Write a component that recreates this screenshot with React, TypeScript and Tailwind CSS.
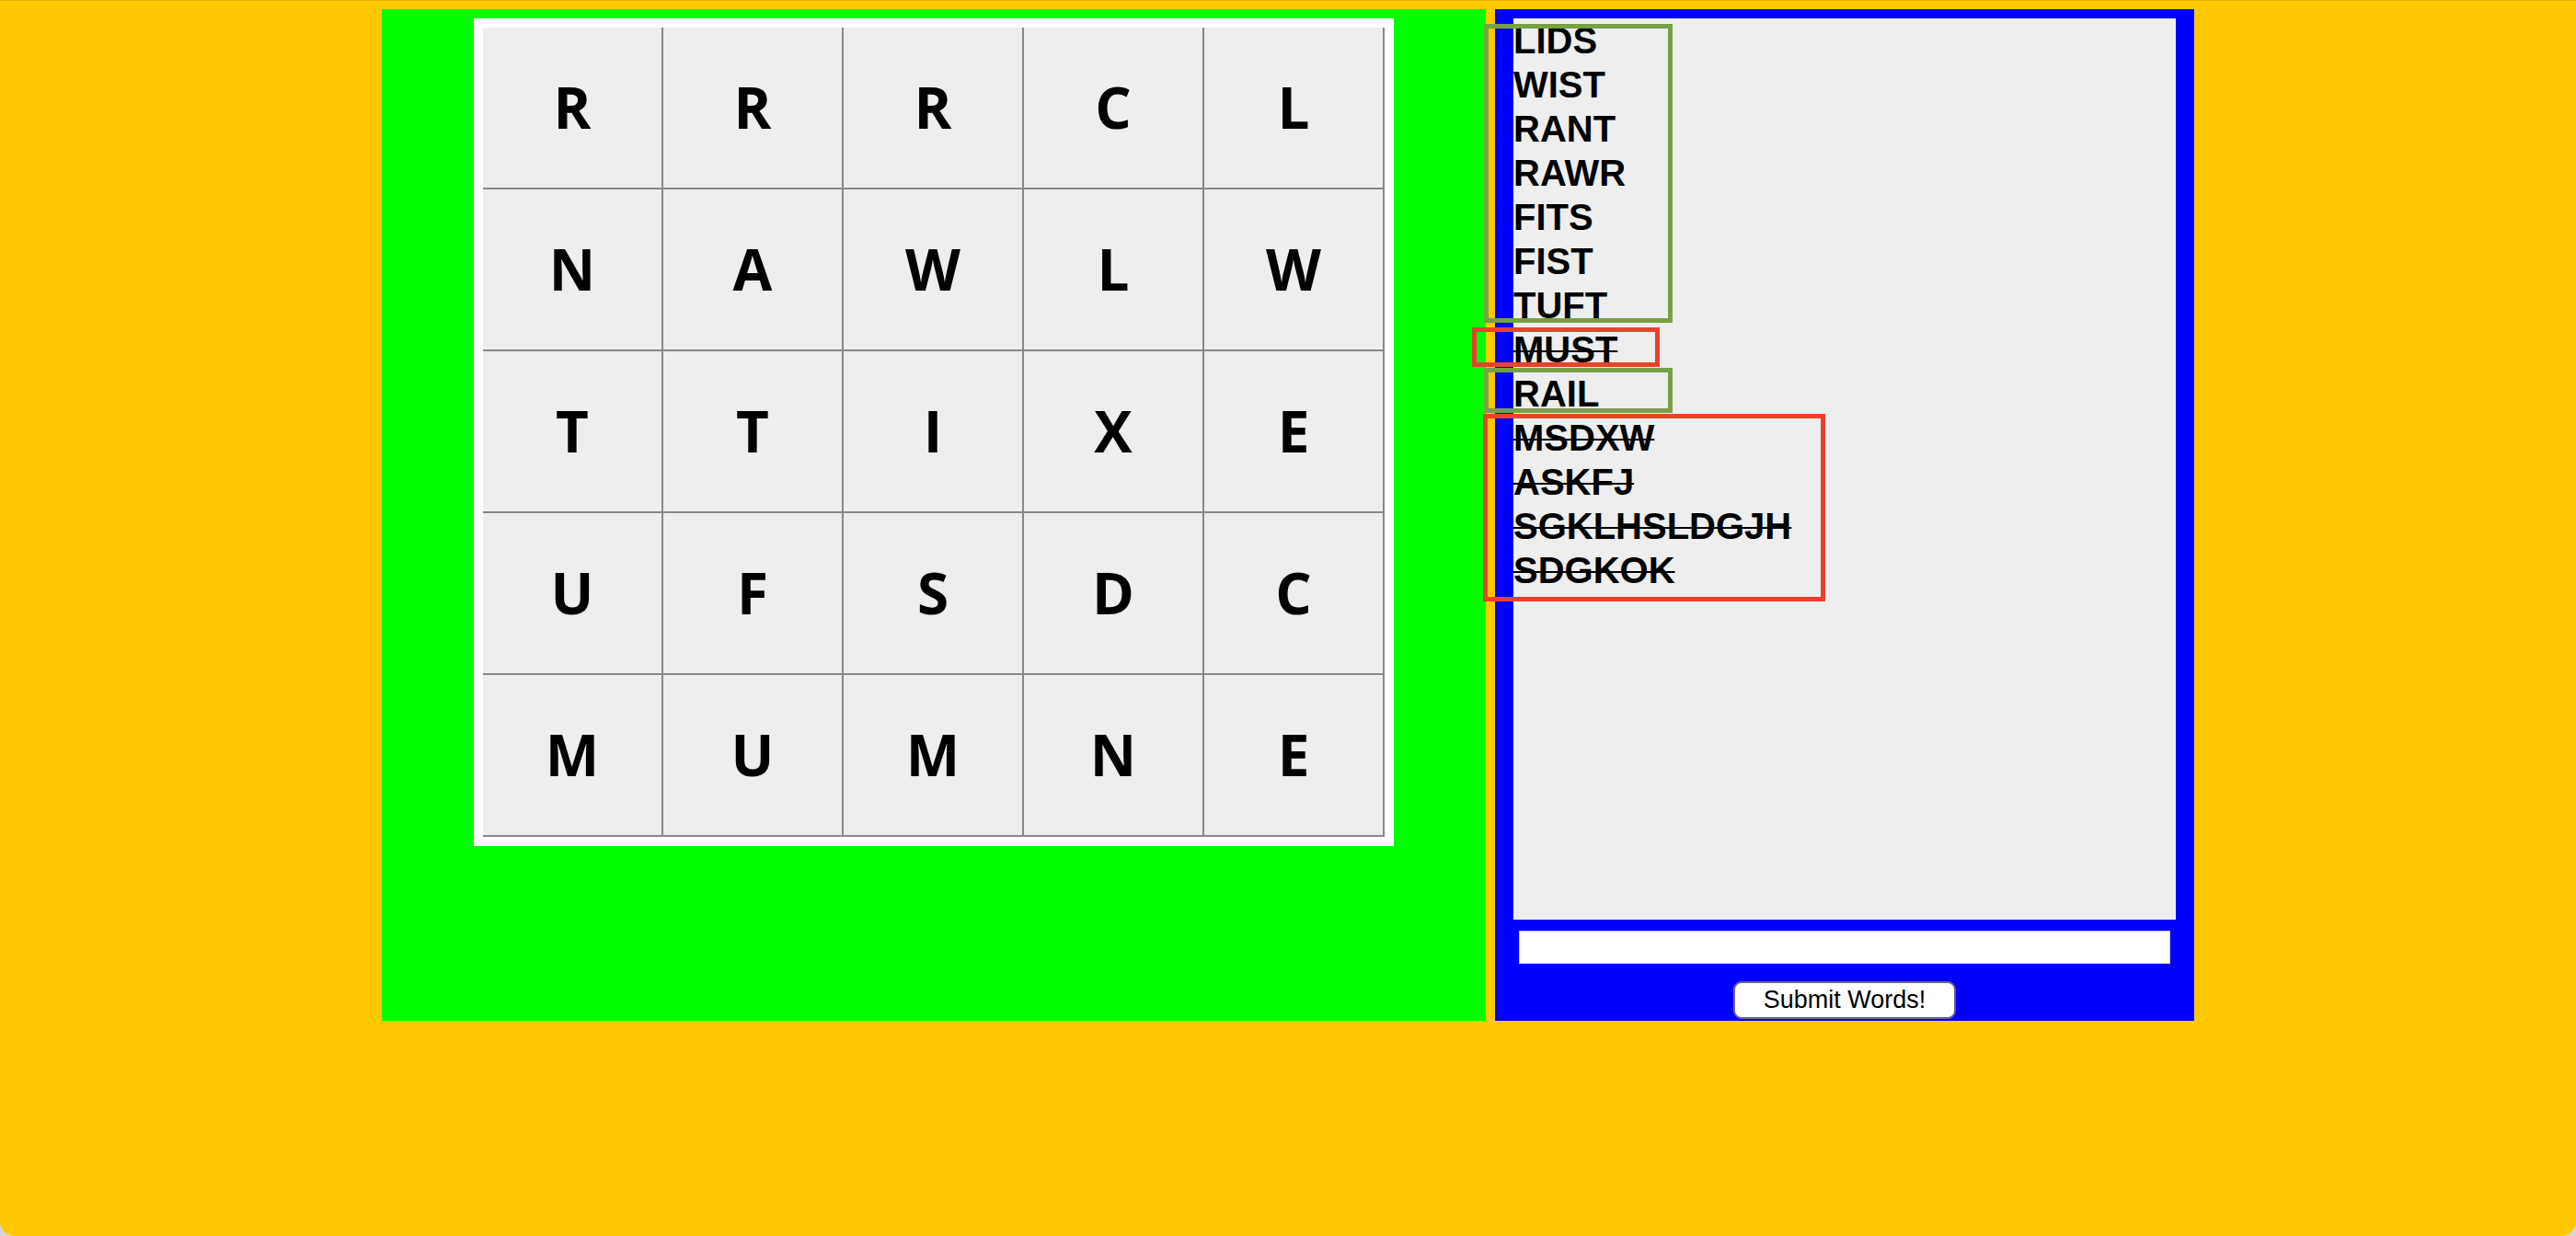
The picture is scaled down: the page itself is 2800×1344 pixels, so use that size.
const board = [
  ["R", "R", "R", "C", "L"],
  ["N", "A", "W", "L", "W"],
  ["T", "T", "I", "X", "E"],
  ["U", "F", "S", "D", "C"],
  ["M", "U", "M", "N", "E"],
]

const words = [
  { w: "LIDS", ok: true },
  { w: "WIST", ok: true },
  { w: "RANT", ok: true },
  { w: "RAWR", ok: true },
  { w: "FITS", ok: true },
  { w: "FIST", ok: true },
  { w: "TUFT", ok: true },
  { w: "MUST", ok: false },
  { w: "RAIL", ok: true },
  { w: "MSDXW", ok: false },
  { w: "ASKFJ", ok: false },
  { w: "SGKLHSLDGJH", ok: false },
  { w: "SDGKOK", ok: false },
]

export default function App() {
  return (
    <div className="h-[1344px] w-full bg-[#d6d6d6]">
      <div className="flex h-full items-start justify-center gap-[10px] rounded-b-[16px] border-t border-[#e3b300] bg-[#ffc800] pt-[9px]">
        {/* Board */}
        <div className="flex h-[1100px] w-[1200px] justify-center bg-[#00ff00] pt-[10px]">
          <div className="h-[900px] w-[1000px] bg-white p-[10px]">
            <div className="grid grid-cols-5">
              {board.flat().map((l, i) => (
                <div
                  key={i}
                  className="flex h-[176px] w-[196px] items-center justify-center border-r-2 border-b-2 border-[#888888] bg-[#eeeeee] pb-[2px] font-['Open_Sans',sans-serif] text-[62px] font-bold text-black"
                >
                  {l}
                </div>
              ))}
            </div>
          </div>
        </div>

        {/* Word list */}
        <div className="flex h-[1100px] w-[760px] flex-col items-center bg-[#0000ff] px-[20px] pt-[10px]">
          <div className="relative h-[980px] w-[720px] bg-[#eeeeee]">
            <div className="font-['Liberation_Sans',Arial,sans-serif] text-[40px] leading-[48px] font-bold text-black">
              {words.map(({ w, ok }) => (
                <div key={w} className={ok ? "" : "line-through decoration-2"}>
                  {w}
                </div>
              ))}
            </div>
            <div className="absolute top-[6px] left-[-32px] h-[325px] w-[205px] border-[5px] border-[#78a045]" />
            <div className="absolute top-[336px] left-[-45px] h-[43px] w-[204px] border-[5px] border-[#e8432a]" />
            <div className="absolute top-[380px] left-[-32px] h-[49px] w-[205px] border-[5px] border-[#78a045]" />
            <div className="absolute top-[430px] left-[-33px] h-[204px] w-[372px] border-[5px] border-[#e8432a]" />
          </div>
          <input
            type="text"
            className="mt-[12px] h-[36px] w-[708px] border border-[#cfcfcf] bg-white outline-none"
          />
          <button className="mt-[19px] h-[41px] w-[242px] rounded-[9px] border-2 border-[#6f5f92] bg-white font-['Liberation_Sans',Arial,sans-serif] text-[27px] leading-none text-black">
            Submit Words!
          </button>
        </div>
      </div>
    </div>
  )
}
